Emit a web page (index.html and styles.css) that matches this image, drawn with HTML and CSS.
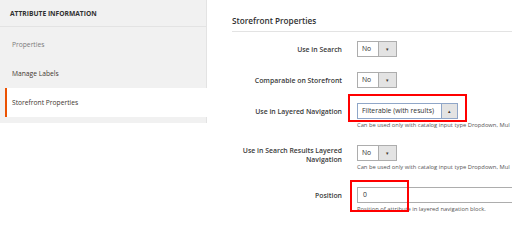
FILE: index.html
```html
<!DOCTYPE html>
<html lang="en">
<head>
    <meta charset="UTF-8">
    <meta name="viewport" content="width=device-width, initial-scale=1.0">
    <title>Storefront Properties</title>
    <link rel="stylesheet" href="styles.css">
</head>
<body>

    <div class="page">
        <!-- left tabs -->
        <aside class="page-nav">
            <div class="page-nav-title">Attribute Information</div>
            <ul class="page-nav-items">
                <li class="nav-item muted">Properties</li>
                <li class="nav-item">Manage Labels</li>
                <li class="nav-item active">Storefront Properties</li>
            </ul>
        </aside>

        <main class="content">
            <h2 class="section-title">Storefront Properties</h2>

            <div class="field">
                <label class="field-label">Use in Search</label>
                <div class="field-control">
                    <div class="select">
                        <span class="select-value">No</span>
                        <span class="select-arrow">&#9662;</span>
                    </div>
                </div>
            </div>

            <div class="field">
                <label class="field-label">Comparable on Storefront</label>
                <div class="field-control">
                    <div class="select">
                        <span class="select-value">No</span>
                        <span class="select-arrow">&#9662;</span>
                    </div>
                </div>
            </div>

            <div class="field">
                <label class="field-label">Use in Layered Navigation</label>
                <div class="field-control">
                    <div class="select select-wide select-open">
                        <span class="select-value">Filterable (with results)</span>
                        <span class="select-arrow">&#9652;</span>
                    </div>
                    <div class="note">Can be used only with catalog input type Dropdown, Mul</div>
                    <div class="mark mark-select"></div>
                </div>
            </div>

            <div class="field">
                <label class="field-label field-label-multi">Use in Search Results Layered Navigation</label>
                <div class="field-control">
                    <div class="select">
                        <span class="select-value">No</span>
                        <span class="select-arrow">&#9662;</span>
                    </div>
                    <div class="note">Can be used only with catalog input type Dropdown, Mul</div>
                </div>
            </div>

            <div class="field">
                <label class="field-label">Position</label>
                <div class="field-control">
                    <div class="text-input">0</div>
                    <div class="note">Position of attribute in layered navigation block.</div>
                    <div class="mark mark-input"></div>
                </div>
            </div>
        </main>
    </div>

</body>
</html>
```

FILE: styles.css
```css
* {
    margin: 0;
    padding: 0;
    box-sizing: border-box;
}

body {
    font-family: "Open Sans", Arial, Helvetica, sans-serif;
    background: #fff;
    color: #303030;
    overflow: hidden;
}

.page {
    display: flex;
    align-items: flex-start;
}

/* left tabs */
.page-nav {
    width: 207px;
    flex-shrink: 0;
    background-color: #f1f1f1;
    border-right: 1px solid #e3e3e3;
    padding-bottom: 6px;
}

.page-nav-title {
    height: 27px;
    line-height: 27px;
    padding-left: 10px;
    font-size: 6.7px;
    font-weight: 700;
    text-transform: uppercase;
    color: #303030;
    border-bottom: 1px solid #e3e3e3;
}

.page-nav-items {
    list-style: none;
    padding-top: 3px;
}

.nav-item {
    height: 29px;
    line-height: 29px;
    padding-left: 12px;
    font-size: 6.7px;
    color: #41362f;
}

.nav-item.muted {
    color: #7a7a7a;
}

.nav-item.active {
    background-color: #fff;
    margin-left: 5px;
    margin-right: -1px;
    border-left: 2px solid #eb5202;
    padding-left: 5px;
}

/* form */
.content {
    flex: 1;
    padding-left: 25px;
    min-width: 0;
    overflow: hidden;
}

.section-title {
    font-size: 8.2px;
    font-weight: 600;
    line-height: 10px;
    padding-top: 16px;
    padding-bottom: 5px;
    border-bottom: 1px solid #e3e3e3;
    color: #303030;
    margin-bottom: 9px;
}

.field {
    display: flex;
    gap: 15px;
    margin-bottom: 15px;
}

.field:last-child {
    margin-bottom: 0;
}

.field-label {
    width: 110px;
    flex-shrink: 0;
    text-align: right;
    font-size: 6.9px;
    font-weight: 600;
    line-height: 9px;
    padding-top: 4px;
    color: #3a3a3a;
}

.field-label-multi {
    padding-top: 1px;
}

.field-control {
    position: relative;
    flex: 1;
    min-width: 0;
}

.select {
    display: flex;
    width: 40px;
    height: 16px;
    border: 1px solid #adadad;
    background: #fff;
}

.select-value {
    flex: 1;
    padding-left: 4px;
    font-size: 6.8px;
    line-height: 14px;
    white-space: nowrap;
}

.select-arrow {
    width: 18px;
    background-color: #e3e3e3;
    border-left: 1px solid #adadad;
    font-size: 5px;
    line-height: 14px;
    text-align: center;
    color: #41362f;
}

.select-wide {
    width: 101px;
}

.select-wide .select-arrow {
    width: 16px;
}

.select-open {
    border-color: #8fa6c8;
}

.select-open .select-arrow {
    border-left-color: #8fa6c8;
}

.text-input {
    width: 160px;
    height: 16px;
    border: 1px solid #adadad;
    border-right: none;
    padding-left: 5px;
    font-size: 6.8px;
    line-height: 14px;
}

.note {
    margin-top: 2px;
    font-size: 5.8px;
    line-height: 9px;
    color: #555;
    white-space: nowrap;
}

/* red highlight boxes drawn over the controls */
.mark {
    position: absolute;
    border: 2px solid #f00;
}

.mark-select {
    left: -9px;
    top: -9px;
    width: 119px;
    height: 28px;
}

.mark-input {
    left: -7px;
    top: -7px;
    width: 59px;
    height: 32px;
}
```
